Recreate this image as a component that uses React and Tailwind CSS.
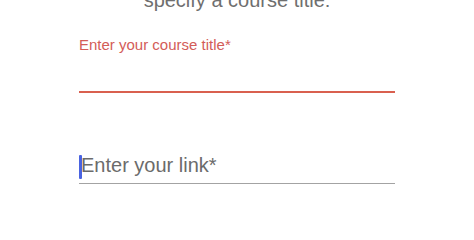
import React from "react";

export default function App() {
  return (
    <div className="w-[474px] h-[220px] bg-white overflow-hidden" style={{ fontFamily: '"Liberation Sans", Arial, sans-serif' }}>
      <div className="mt-[-12px] text-center text-[20px] leading-[24px] text-[#6f6f6f]">
        specify a course title:
      </div>
      <div className="w-[316px] mx-auto mt-[24px]">
        <div className="text-[15px] leading-[18px] text-[#d35c58]">Enter your course title*</div>
        <div className="h-[39px] border-b-2 border-[#d9604f]"></div>
        <div className="mt-[60px] relative h-[31px] border-b border-[#a3a3a3] flex items-end pb-[6px]">
          <span className="absolute left-0 top-[2px] w-[3px] h-[24px] rounded-[1px] bg-[#4a63e0]"></span>
          <span className="pl-[2px] text-[20px] leading-[24px] text-[#6b6b6b]">Enter your link*</span>
        </div>
      </div>
    </div>
  );
}
